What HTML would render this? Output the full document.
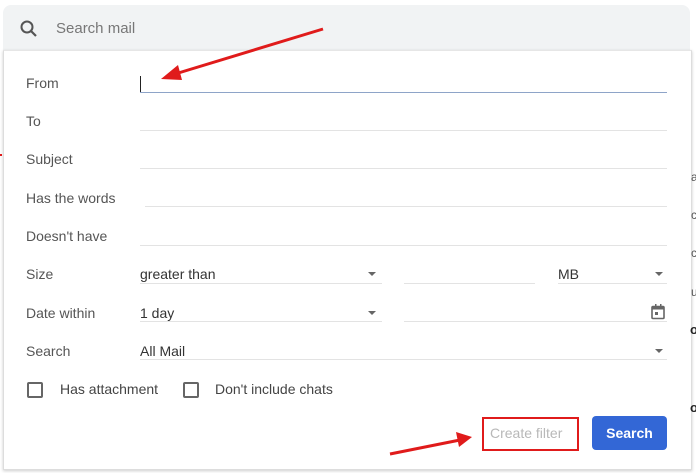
<!DOCTYPE html>
<html><head><style>
body{margin:0;width:696px;height:473px;background:#fff;font-family:"Liberation Sans",Arial,sans-serif;position:relative;overflow:hidden;color:#444}
.a{position:absolute}
.lbl{position:absolute;left:26px;font-size:14px;color:#555}
.ln{position:absolute;height:1px;background:#e3e3e3}
.v{position:absolute;font-size:14px;color:#333}
.tri{position:absolute;width:0;height:0;border-left:4px solid transparent;border-right:4px solid transparent;border-top:4px solid #666}
.cb{position:absolute;width:12px;height:12px;border:2px solid #666;border-radius:2px}
</style></head><body>
<div class="a" style="left:3px;top:5px;width:687px;height:46px;background:#f1f3f4;border-radius:8px 8px 0 0"></div>
<svg class="a" style="left:19px;top:19px" width="20" height="20" viewBox="0 0 20 20"><circle cx="8" cy="8" r="5.5" fill="none" stroke="#555" stroke-width="2"/><line x1="12" y1="12" x2="17" y2="17" stroke="#555" stroke-width="2.2"/></svg>
<div class="a" style="left:56px;top:20px;font-size:15px;color:#777">Search mail</div>
<div class="a" style="left:3px;top:50px;width:687px;height:418px;border:1px solid #ddd;border-top:1px solid #e6e6e6;box-shadow:0 1px 3px rgba(0,0,0,.2);background:#fff"></div>
<div class="a" style="left:691px;top:170px;font-size:12px;color:#555">a</div>
<div class="a" style="left:691px;top:208px;font-size:12px;color:#555">c</div>
<div class="a" style="left:691px;top:246px;font-size:12px;color:#555">c</div>
<div class="a" style="left:691px;top:285px;font-size:12px;color:#555">u</div>
<div class="a" style="left:690px;top:322px;font-size:13px;color:#222;font-weight:bold">o</div>
<div class="a" style="left:690px;top:400px;font-size:13px;color:#222;font-weight:bold">o</div>

<div class="lbl" style="top:75px">From</div>
<div class="a" style="left:140px;top:76px;width:1px;height:16px;background:#222"></div>
<div class="ln" style="left:140px;top:92px;width:527px;background:#8ea4c8"></div>
<div class="lbl" style="top:113px">To</div><div class="ln" style="left:140px;top:130px;width:527px"></div>
<div class="lbl" style="top:151px">Subject</div><div class="ln" style="left:140px;top:168px;width:527px"></div>
<div class="lbl" style="top:190px">Has the words</div><div class="ln" style="left:145px;top:206px;width:522px"></div>
<div class="lbl" style="top:228px">Doesn't have</div><div class="ln" style="left:140px;top:245px;width:527px"></div>
<div class="lbl" style="top:266px">Size</div>
<div class="v" style="left:140px;top:266px">greater than</div><div class="tri" style="left:368px;top:272px"></div>
<div class="ln" style="left:140px;top:283px;width:242px"></div>
<div class="ln" style="left:404px;top:283px;width:131px"></div>
<div class="v" style="left:558px;top:266px">MB</div><div class="tri" style="left:655px;top:272px"></div>
<div class="ln" style="left:558px;top:283px;width:109px"></div>
<div class="lbl" style="top:305px">Date within</div>
<div class="v" style="left:140px;top:305px">1 day</div><div class="tri" style="left:368px;top:311px"></div>
<div class="ln" style="left:140px;top:321px;width:242px"></div>
<svg class="a" style="left:651px;top:304px" width="14" height="16" viewBox="0 0 14 16"><rect x="1" y="2.5" width="12" height="12" rx="1" fill="none" stroke="#666" stroke-width="1.6"/><rect x="1" y="2.5" width="12" height="3" fill="#666"/><rect x="4" y="0" width="1.5" height="3" fill="#666"/><rect x="9" y="0" width="1.5" height="3" fill="#666"/><rect x="4" y="8" width="3" height="3" fill="#666"/></svg>
<div class="ln" style="left:404px;top:321px;width:263px"></div>
<div class="lbl" style="top:343px">Search</div>
<div class="v" style="left:140px;top:343px">All Mail</div><div class="tri" style="left:655px;top:349px"></div>
<div class="ln" style="left:140px;top:359px;width:527px"></div>
<div class="cb" style="left:27px;top:382px"></div>
<div class="v" style="left:60px;top:381px;color:#444">Has attachment</div>
<div class="cb" style="left:183px;top:382px"></div>
<div class="v" style="left:215px;top:381px;color:#444">Don't include chats</div>
<div class="a" style="left:482px;top:417px;width:93px;height:30px;border:2px solid #e01b1b"></div>
<div class="a" style="left:490px;top:425px;font-size:14px;color:#b8b8b8">Create filter</div>
<div class="a" style="left:592px;top:416px;width:75px;height:34px;background:#3367d6;border-radius:4px;color:#fff;font-size:14px;font-weight:bold;text-align:center;line-height:34px">Search</div>
<svg class="a" style="left:0;top:0" width="696" height="473">
<line x1="323" y1="29" x2="175" y2="74" stroke="#e01b1b" stroke-width="3"/>
<polygon points="161,79 178,65 182,80" fill="#e01b1b"/>
<line x1="390" y1="454" x2="460" y2="440" stroke="#e01b1b" stroke-width="3"/>
<polygon points="472,437 456,432 459,447" fill="#e01b1b"/>
<line x1="0" y1="155" x2="2" y2="155" stroke="#e01b1b" stroke-width="2"/>
</svg>
</body></html>
